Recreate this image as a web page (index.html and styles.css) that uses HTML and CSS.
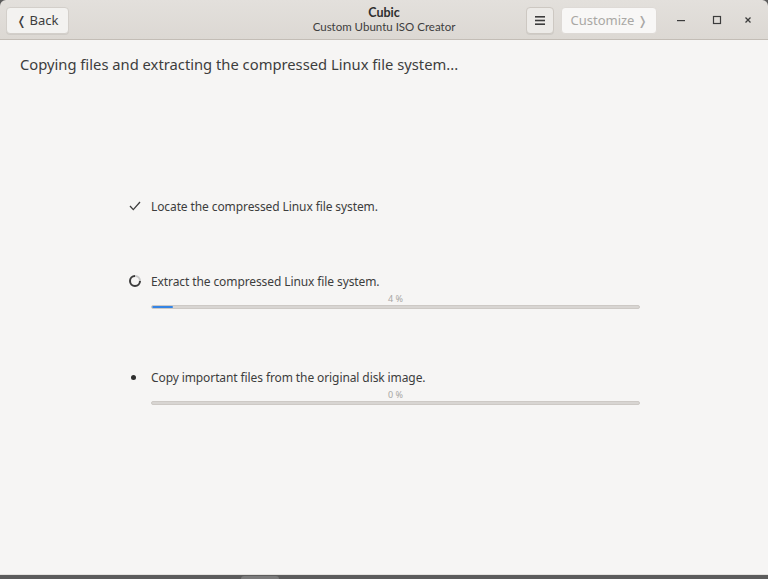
FILE: index.html
```html
<!DOCTYPE html>
<html>
<head>
<meta charset="utf-8">
<link rel="stylesheet" href="styles.css">
</head>
<body>
<div class="window">
  <header class="headerbar">
    <div class="hb-left">
      <button class="btn back"><span class="chev">&#x276C;</span>Back</button>
    </div>
    <div class="hb-title">
      <div class="title">Cubic</div>
      <div class="subtitle">Custom Ubuntu ISO Creator</div>
    </div>
    <div class="hb-right">
      <button class="btn menu">
        <svg width="10" height="9" viewBox="0 0 10 9"><rect x="0" y="0" width="10" height="1.6" fill="#3c3c3c"/><rect x="0" y="3.7" width="10" height="1.6" fill="#3c3c3c"/><rect x="0" y="7.4" width="10" height="1.6" fill="#3c3c3c"/></svg>
      </button>
      <button class="btn customize">Customize<span class="chev">&#x276D;</span></button>
      <div class="wctl">
        <span class="wbtn"><svg width="10" height="10" viewBox="0 0 10 10"><rect x="1" y="5" width="8" height="1.2" fill="#3c3c3c"/></svg></span>
        <span class="wbtn"><svg width="10" height="10" viewBox="0 0 10 10"><rect x="1.5" y="1.5" width="7" height="7" fill="none" stroke="#3c3c3c" stroke-width="1.2"/></svg></span>
        <span class="wbtn"><svg width="10" height="10" viewBox="0 0 10 10"><path d="M2.5 2.5 L7.5 7.5 M7.5 2.5 L2.5 7.5" stroke="#3c3c3c" stroke-width="1.3"/></svg></span>
      </div>
    </div>
  </header>
  <main class="content">
    <h1 class="heading">Copying files and extracting the compressed Linux file system...</h1>
    <div class="steps">
      <div class="step s1">
        <div class="row">
          <span class="icon"><svg width="12" height="10" viewBox="0 0 12 10"><path d="M1 5 L4.3 8.6 L11 1" fill="none" stroke="#3c3c3c" stroke-width="1.3"/></svg></span>
          <span class="label">Locate the compressed Linux file system.</span>
        </div>
      </div>
      <div class="step s2">
        <div class="row">
          <span class="icon"><svg width="12" height="12" viewBox="0 0 12 12">
            <path d="M6 1 A5 5 0 1 0 11 6" fill="none" stroke="#3c3c3c" stroke-width="2"/>
            <path d="M11 6 A5 5 0 0 0 6 1" fill="none" stroke="#c8c8c8" stroke-width="2"/>
          </svg></span>
          <span class="label">Extract the compressed Linux file system.</span>
        </div>
        <div class="pct">4 %</div>
        <div class="bar"><div class="fill" style="width:4.3%"></div></div>
      </div>
      <div class="step s3">
        <div class="row">
          <span class="icon"><span class="dot"></span></span>
          <span class="label">Copy important files from the original disk image.</span>
        </div>
        <div class="pct">0 %</div>
        <div class="bar"><div class="fill" style="width:0%"></div></div>
      </div>
    </div>
  </main>
  <footer class="dock"><span class="tab"></span></footer>
</div>
</body>
</html>
```

FILE: styles.css
```css
* { box-sizing: border-box; }
html, body { margin: 0; padding: 0; }
body {
  width: 768px;
  height: 579px;
  overflow: hidden;
  font-family: "Noto Sans", "DejaVu Sans", sans-serif;
  color: #3d3d3d;
  background: #5c5c5c;
}
.window {
  display: flex;
  flex-direction: column;
  height: 579px;
}
.headerbar {
  height: 40px;
  flex: none;
  display: flex;
  align-items: center;
  justify-content: space-between;
  padding: 0 6px;
  background: linear-gradient(#e3e0dc, #dcd8d3);
  border-bottom: 1px solid #c3bdb6;
  border-radius: 6px 6px 0 0;
  position: relative;
}
.btn {
  font-family: inherit;
  height: 27px;
  border: 1px solid #d3cfca;
  border-radius: 4px;
  background: #f3f2f0;
  color: #3d3d3d;
  font-size: 13px;
  padding: 0;
  display: flex;
  align-items: center;
  justify-content: center;
  box-shadow: 0 1px 0 rgba(0,0,0,0.06);
}
.back { width: 63px; margin-top: 1px; }
.back .chev { color: #3d3d3d; font-size: 12px; margin-right: 3px; }
.hb-title {
  position: absolute;
  left: 0; right: 0; top: 5px;
  text-align: center;
  pointer-events: none;
  font-family: Lato, "Noto Sans", sans-serif;
}
.title { font-size: 12.5px; line-height: 15px; font-weight: bold; color: #2e2e2e; }
.subtitle { font-size: 11.5px; line-height: 13px; color: #3d3d3d; }
.hb-right { display: flex; align-items: center; margin-top: 1px; }
.menu { width: 28px; background: #eceae7; border-color: #cdc8c2; }
.customize {
  width: 96px;
  margin-left: 7px;
  color: #a9a7a4;
  background: #f8f7f6;
  border-color: #dedad6;
  box-shadow: none;
}
.customize .chev { margin-left: 3px; font-size: 12px; }
.wctl { display: flex; margin-left: 5px; }
.wbtn { width: 35px; height: 24px; display: flex; align-items: center; justify-content: center; }
.wbtn:first-child { width: 37px; }
.wbtn:last-child { width: 28px; }
.content {
  flex: 1;
  background: #f6f5f4;
  padding: 0 20px;
}
.heading {
  margin: 14px 0 0 0;
  font-size: 14.75px;
  font-weight: normal;
  line-height: 20px;
  color: #3d3d3d;
}
.steps {
  margin: 123px 0 0 108px;
  width: 512px;
}
.row { display: flex; align-items: center; height: 18px; }
.icon { width: 23px; display: flex; align-items: center; justify-content: flex-start; padding-left: 1px; }
.label { font-size: 12px; color: #3d3d3d; letter-spacing: -0.1px; }
.s2 { margin-top: 57px; }
.s3 { margin-top: 59px; }
.pct {
  margin-left: 23px;
  text-align: center;
  font-size: 9px;
  color: #a8a6a3;
  line-height: 11px;
  margin-top: 3px;
}
.bar {
  margin-left: 23px;
  margin-top: 1px;
  height: 4px;
  border-radius: 2px;
  background: #d8d5d2;
  border: 1px solid #cdc9c5;
  overflow: hidden;
}
.fill { height: 100%; background: #3584e4; border-radius: 2px; }
.dot { width: 5px; height: 5px; border-radius: 50%; background: #2e2e2e; margin-left: 2px; }
.dock {
  height: 5px;
  flex: none;
  background: #5c5c5c;
  border-top: 1px solid #e4e2df;
  position: relative;
}
.tab {
  position: absolute;
  left: 241px; top: 1px;
  width: 38px; height: 6px;
  background: #7b7b7b;
  border-radius: 3px 3px 0 0;
}
```
